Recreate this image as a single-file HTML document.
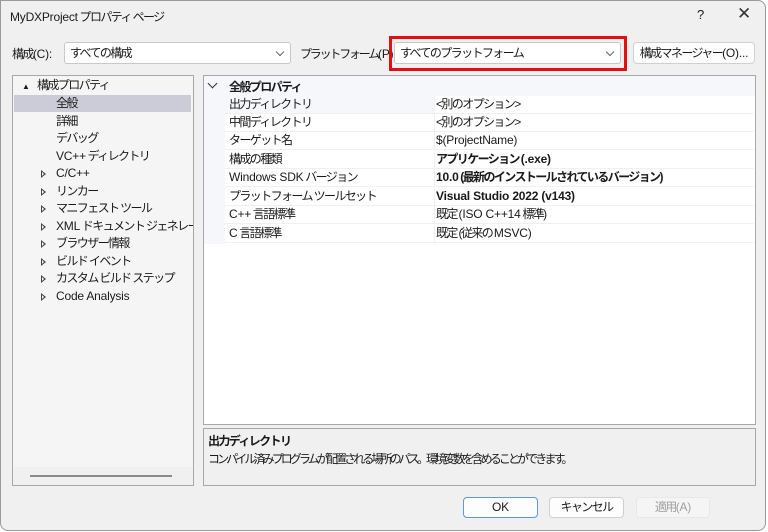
<!DOCTYPE html>
<html><head><meta charset="utf-8"><style>
*{box-sizing:border-box;margin:0;padding:0}
body{width:768px;height:532px;background:#fff;font-family:"Liberation Sans","Noto Sans CJK JP",sans-serif;font-size:12px;letter-spacing:-1.6px;color:#1a1a1a;position:relative;overflow:hidden}
.l{letter-spacing:-0.2px}
.dlg{position:absolute;left:0;top:0;width:766px;height:531px;background:#f0f0f0;border:1px solid #9a9a9a;border-radius:0 8px 8px 8px}
.a{position:absolute;white-space:nowrap}
.combo{position:absolute;background:#fff;border:1px solid #c8c8c8;border-radius:3px;height:22px;line-height:20px;padding-left:5px;white-space:nowrap}
.chev{position:absolute;right:7px;top:6px;width:6px;height:6px;border-right:1px solid #666;border-bottom:1px solid #666;transform:rotate(45deg)}
.btn{position:absolute;background:#fdfdfd;border:1px solid #d0d0d0;border-radius:4px;text-align:center;line-height:19px;height:21px;white-space:nowrap}
.tree div{position:absolute;white-space:nowrap;height:17px;line-height:17px}
.tri{position:absolute;left:41px;width:0;height:0;border-top:4px solid transparent;border-bottom:4px solid transparent;border-left:5px solid #444}
.tri:after{content:"";position:absolute;left:-4px;top:-2px;border-top:2px solid transparent;border-bottom:2px solid transparent;border-left:2px solid #fff}
.row{position:absolute;left:225px;width:529px;height:18px;border-bottom:1px solid #eef0f4;background:#fff;line-height:17px;white-space:nowrap}
.row span{position:absolute;left:4px}
.row b,.row i{position:absolute;left:211px;font-style:normal}
.row:before{content:"";position:absolute;left:209px;top:0;bottom:0;border-left:1px solid #eef0f4}
</style></head><body>
<div class="dlg"></div>
<div class="a" style="left:10px;top:8px"><span class="l">MyDXProject</span> プロパティ ページ</div>
<div class="a" style="left:697px;top:7px;font-size:13px">?</div>
<div class="a" style="left:737px;top:4px;font-size:17px;font-weight:300;color:#333">✕</div>

<div class="a" style="left:12px;top:45px">構成<span class="l">(C):</span></div>
<div class="combo" style="left:64px;top:42px;width:227px">すべての構成<div class="chev"></div></div>
<div class="a" style="left:300px;top:45px;letter-spacing:-2.2px">プラットフォーム<span class="l">(P):</span></div>
<div class="a" style="left:389px;top:36px;width:238px;height:35px;border:3px solid #e01010"></div>
<div class="combo" style="left:394px;top:42px;width:227px">すべてのプラットフォーム<div class="chev"></div></div>
<div class="btn" style="left:633px;top:42px;width:122px;height:22px;line-height:20px">構成マネージャー<span class="l">(O)...</span></div>

<div class="a" style="left:12px;top:75px;width:182px;height:411px;background:#f5f5f5;border:1px solid #a8a8a8"></div>
<div class="a" style="left:13px;top:467px;width:180px;height:18px;background:#f0f0f0"></div>
<div class="a" style="left:30px;top:475px;width:142px;height:2px;background:#8a8a8a"></div>
<div class="a" style="left:14px;top:95px;width:177px;height:17px;background:#ccccd8"></div>
<div class="tree">
<div style="left:22px;top:78px;font-size:8px">▲</div>
<div style="left:37px;top:77px">構成プロパティ</div>
<div style="left:56px;top:95px">全般</div>
<div style="left:56px;top:113px">詳細</div>
<div style="left:56px;top:130px">デバッグ</div>
<div style="left:56px;top:148px"><span class="l">VC++</span> ディレクトリ</div>
<div style="left:56px;top:165px" class="l">C/C++</div>
<div style="left:56px;top:183px">リンカー</div>
<div style="left:56px;top:200px">マニフェスト ツール</div>
<div style="left:56px;top:218px;width:137px;overflow:hidden"><span class="l">XML</span> ドキュメント ジェネレーター</div>
<div style="left:56px;top:235px">ブラウザー情報</div>
<div style="left:56px;top:253px">ビルド イベント</div>
<div style="left:56px;top:270px">カスタム ビルド ステップ</div>
<div style="left:56px;top:288px" class="l">Code Analysis</div>
</div>
<div class="tri" style="top:170px"></div><div class="tri" style="top:188px"></div><div class="tri" style="top:205px"></div><div class="tri" style="top:223px"></div><div class="tri" style="top:240px"></div><div class="tri" style="top:258px"></div><div class="tri" style="top:275px"></div><div class="tri" style="top:293px"></div>

<div class="a" style="left:203px;top:75px;width:553px;height:350px;background:#fff;border:1px solid #a8a8a8"></div>
<div class="a" style="left:204px;top:76px;width:551px;height:20px;background:#f5f7fb"></div>
<div class="a" style="left:204px;top:96px;width:21px;height:148px;background:#f5f7fb"></div>
<div class="a" style="left:209px;top:77px;width:7px;height:7px;border-right:1.5px solid #333;border-bottom:1.5px solid #333;transform:translateY(3px) rotate(45deg)"></div>
<div class="a" style="left:229px;top:78px;font-weight:bold">全般プロパティ</div>
<div class="row" style="top:96px;background:#f5f7fb"><span>出力ディレクトリ</span><i style="background:#fff;left:210px;padding-left:1px;width:319px">&lt;別のオプション&gt;</i></div>
<div class="row" style="top:114px"><span>中間ディレクトリ</span><i>&lt;別のオプション&gt;</i></div>
<div class="row" style="top:132px"><span>ターゲット名</span><i class="l">$(ProjectName)</i></div>
<div class="row" style="top:151px"><span>構成の種類</span><b>アプリケーション <span class="l" style="position:static">(.exe)</span></b></div>
<div class="row" style="top:169px"><span><span class="l" style="position:static">Windows SDK</span> バージョン</span><b><span class="l" style="position:static">10.0</span> (最新のインストールされているバージョン)</b></div>
<div class="row" style="top:188px"><span>プラットフォーム ツールセット</span><b class="l">Visual Studio 2022 (v143)</b></div>
<div class="row" style="top:206px"><span><span class="l" style="position:static">C++</span> 言語標準</span><i>既定 <span class="l" style="position:static">(ISO C++14</span> 標準)</i></div>
<div class="row" style="top:225px"><span><span class="l" style="position:static">C</span> 言語標準</span><i>既定 (従来の <span class="l" style="position:static">MSVC)</span></i></div>

<div class="a" style="left:203px;top:428px;width:553px;height:58px;background:#f0f0f0;border:1px solid #a8a8a8"></div>
<div class="a" style="left:208px;top:432px;font-weight:bold">出力ディレクトリ</div>
<div class="a" style="left:208px;top:450px;letter-spacing:-2.9px">コンパイル済みプログラムが配置される場所のパス。環境変数を含めることができます。</div>

<div class="btn l" style="left:463px;top:497px;width:75px;border:1px solid #5a9ad8">OK</div>
<div class="btn" style="left:549px;top:497px;width:75px">キャンセル</div>
<div class="btn" style="left:636px;top:497px;width:74px;background:#f5f5f5;border-color:#e8e8e8;color:#a0a0a0">適用<span class="l">(A)</span></div>
</body></html>
